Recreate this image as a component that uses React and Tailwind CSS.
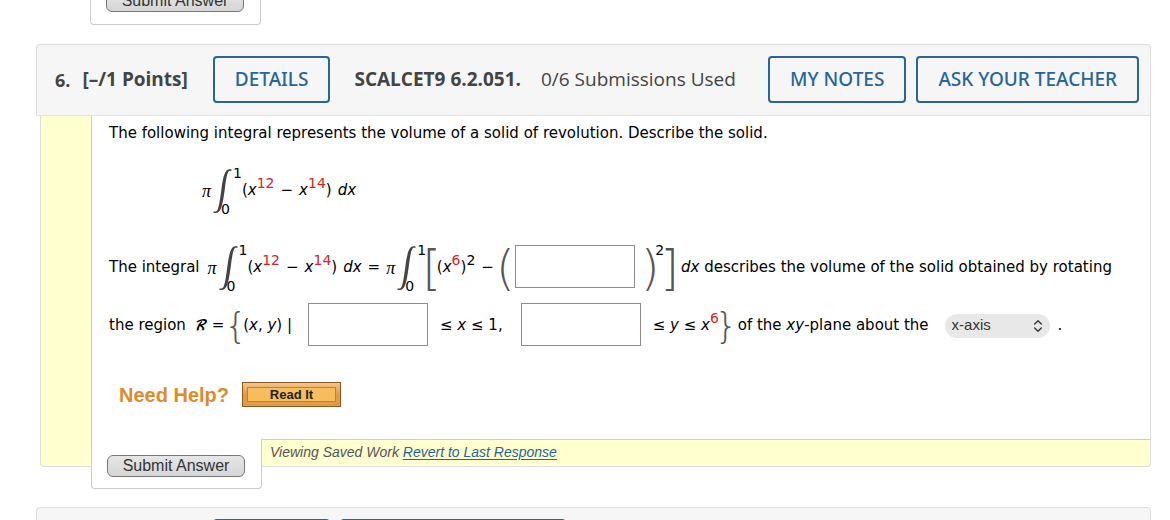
import { useState } from 'react'
import { ChevronsUpDown } from 'lucide-react'

function HeaderButton({ children }) {
  return (
    <button
      type="button"
      className="h-[47px] shrink-0 rounded border-2 border-[#27659b] px-5 font-['Noto_Sans','Open_Sans',sans-serif] text-[19px] font-medium whitespace-nowrap text-[#27659b]"
    >
      {children}
    </button>
  )
}

function SubmitTab({ className = '' }) {
  return (
    <div className={`w-[171px] shrink-0 rounded-b border border-t-0 border-[#ccc] bg-white pr-4 pb-[11px] pl-[15px] ${className}`}>
      <button
        type="submit"
        className="h-[22px] w-full rounded-md border border-[#777] bg-linear-to-b from-[#e6e6e6] to-[#d6d6d6] font-['Liberation_Sans',Arial,sans-serif] text-base leading-5 text-[#333]"
      >
        Submit Answer
      </button>
    </div>
  )
}

function Integral() {
  return (
    <span className="ml-0.5 inline-flex h-[50px] items-center text-sm leading-[14px]">
      <svg viewBox="0 0 19 46" className="h-[46px] w-[19px]" fill="#444" role="img" aria-label="integral">
        <path d="M.5 43.5h2c2.5 0 3.5-5 5.5-19C10 8 12 1.3 16.5 1.3h2v1.5H17c-2.5 0-3.5 5.2-5.3 19.2C9.5 38 8 45 2.5 45h-2Z" />
      </svg>
      <span className="-ml-[11px] flex h-[50px] flex-col justify-between">
        <span className="pl-3">1</span>
        <span>0</span>
      </span>
    </span>
  )
}

function Delim({ children, className = '-mx-1 text-5xl' }) {
  return (
    <span className={`font-['DejaVu_Sans'] leading-none font-extralight text-[#555] ${className}`}>{children}</span>
  )
}

function Pi() {
  return <span className="font-['Liberation_Serif','Times_New_Roman',serif] text-lg italic">π</span>
}

function Power({ value, plain }) {
  return <sup className={plain ? 'text-sm' : 'text-sm text-[#d8231f]'}>{value}</sup>
}

function Integrand() {
  return (
    <>
      <span>(<i>x</i><Power value="12" /><span className="mx-1.5">−</span><i>x</i><Power value="14" />)</span>
      <i className="ml-1.5">dx</i>
    </>
  )
}

function Answer({ label, value, onChange, className = '' }) {
  return (
    <input
      type="text"
      aria-label={label}
      value={value}
      onChange={(e) => onChange(e.target.value)}
      className={`mb-0.5 h-[43px] w-[120px] shrink-0 border border-[#8c8c8c] bg-white px-2 outline-none ${className}`}
    />
  )
}

export default function App() {
  const [radius, setRadius] = useState('')
  const [lower, setLower] = useState('')
  const [bound, setBound] = useState('')
  const [axis, setAxis] = useState('x-axis')

  return (
    <div className="h-screen overflow-hidden bg-white pr-[19px] pl-9 font-['DejaVu_Sans',Verdana,sans-serif] text-[15px] text-black">
      {/* Previous question */}
      <SubmitTab className="-mt-[10px] ml-[54px]" />

      {/* Question header */}
      <header className="mt-[19px] flex h-[72px] items-center rounded-t border border-[#ddd] border-b-[#e6e6d5] bg-[#f6f6f6] pr-[11px] pl-[18px] font-['Open_Sans',sans-serif] text-[19px] whitespace-nowrap text-[#444]">
        <strong className="mr-3 text-lg">6.</strong>
        <strong className="mr-[25px]">[–/1 Points]</strong>
        <HeaderButton>DETAILS</HeaderButton>
        <strong className="mr-5 ml-6">SCALCET9 6.2.051.</strong>
        <span>0/6 Submissions Used</span>
        <div className="ml-auto flex gap-[10px]">
          <HeaderButton>MY NOTES</HeaderButton>
          <HeaderButton>ASK YOUR TEACHER</HeaderButton>
        </div>
      </header>

      {/* Question body */}
      <form className="ml-1 rounded-b border border-t-0 border-[#ddd] bg-[#ffffd0] pl-[50px]" onSubmit={(e) => e.preventDefault()}>
        <div className="border-l border-[#ccc] bg-white pt-[7px] pl-[17px] whitespace-nowrap">
          <p className="leading-5">The following integral represents the volume of a solid of revolution. Describe the solid.</p>

          <div className="mt-[23px] ml-[93px] flex h-[50px] items-center">
            <Pi />
            <Integral />
            <Integrand />
          </div>

          <div className="mt-[27px] flex h-[50px] items-center">
            <span className="mr-2">The integral</span>
            <Pi />
            <Integral />
            <Integrand />
            <span className="mx-1.5">=</span>
            <Pi />
            <Integral />
            <Delim>[</Delim>
            <span>(<i>x</i><Power value="6" />)<Power value="2" plain /><span className="mx-1.5">−</span></span>
            <Delim>(</Delim>
            <Answer label="Inner radius" value={radius} onChange={setRadius} className="ml-1" />
            <Delim className="-mr-1 ml-1.5 text-5xl">)</Delim>
            <span className="self-start text-sm leading-[14px]">2</span>
            <Delim>]</Delim>
            <span className="ml-1.5"><i>dx</i> describes the volume of the solid obtained by rotating</span>
          </div>

          <div className="mt-2 flex h-[50px] items-center">
            <span className="mr-2">the region</span>
            <span className="font-['DejaVu_Math_TeX_Gyre',serif] text-sm leading-none font-bold italic">ℛ</span>
            <span className="ml-1.5">=</span>
            <Delim className="text-4xl">{'{'}</Delim>
            <span className="-ml-1">(<i>x</i>, <i>y</i>) |</span>
            <Answer label="Lower bound for x" value={lower} onChange={setLower} className="ml-4" />
            <span className="mr-[18px] ml-3">≤ <i>x</i> ≤ 1,</span>
            <Answer label="Lower bound for y" value={bound} onChange={setBound} />
            <span className="ml-3">≤ <i>y</i> ≤ <i>x</i><Power value="6" /></span>
            <Delim className="-ml-1 text-4xl">{'}'}</Delim>
            <span className="mr-4">of the <i>xy</i>-plane about the</span>
            <span className="relative">
              <select
                aria-label="Axis of rotation"
                value={axis}
                onChange={(e) => setAxis(e.target.value)}
                className="h-6 w-[105px] appearance-none rounded-full bg-[#e8e8e8] pl-[7px] font-['Liberation_Sans',Arial,sans-serif] text-[15px] text-[#333]"
              >
                <option>x-axis</option>
                <option>y-axis</option>
              </select>
              <ChevronsUpDown className="pointer-events-none absolute top-1 right-1 size-4 text-[#333]" />
            </span>
            <span className="ml-2">.</span>
          </div>

          <div className="mt-[30px] flex items-center gap-[13px] pb-[30px] pl-[10px] font-['Liberation_Sans',Arial,sans-serif] font-bold">
            <span className="text-xl text-[#e08a2c]">Need Help?</span>
            <button
              type="button"
              className="h-[25px] w-[99px] border border-[#8a5a22] bg-linear-to-b from-[#f3c48c] via-[#e39a45] to-[#e39a45] p-1 text-[13px] text-[#222]"
            >
              <span className="flex h-full items-center justify-center border border-[#b98238] bg-[#f5bd5c]">Read It</span>
            </button>
          </div>
        </div>

        <div className="flex items-start">
          <SubmitTab className="-mb-[23px] pt-4" />
          <div className="h-[26px] flex-1 border-t border-[#ccc] pl-2 font-['Liberation_Sans',Arial,sans-serif] text-sm leading-6 text-[#555] italic">
            Viewing Saved Work <a href="#revert" className="text-[#27659b] underline underline-offset-2">Revert to Last Response</a>
          </div>
        </div>
      </form>

      {/* Next question */}
      <header className="mt-10 flex h-[71px] items-center rounded-t border border-[#ddd] bg-[#f6f6f6] pl-[18px] font-['Open_Sans',sans-serif] text-[19px] whitespace-nowrap text-[#444]">
        <strong className="mr-3 text-lg">7.</strong>
        <strong className="mr-[25px]">[–/1 Points]</strong>
        <HeaderButton>DETAILS</HeaderButton>
        <div className="ml-[10px]">
          <HeaderButton>PRACTICE ANOTHER</HeaderButton>
        </div>
      </header>
    </div>
  )
}
